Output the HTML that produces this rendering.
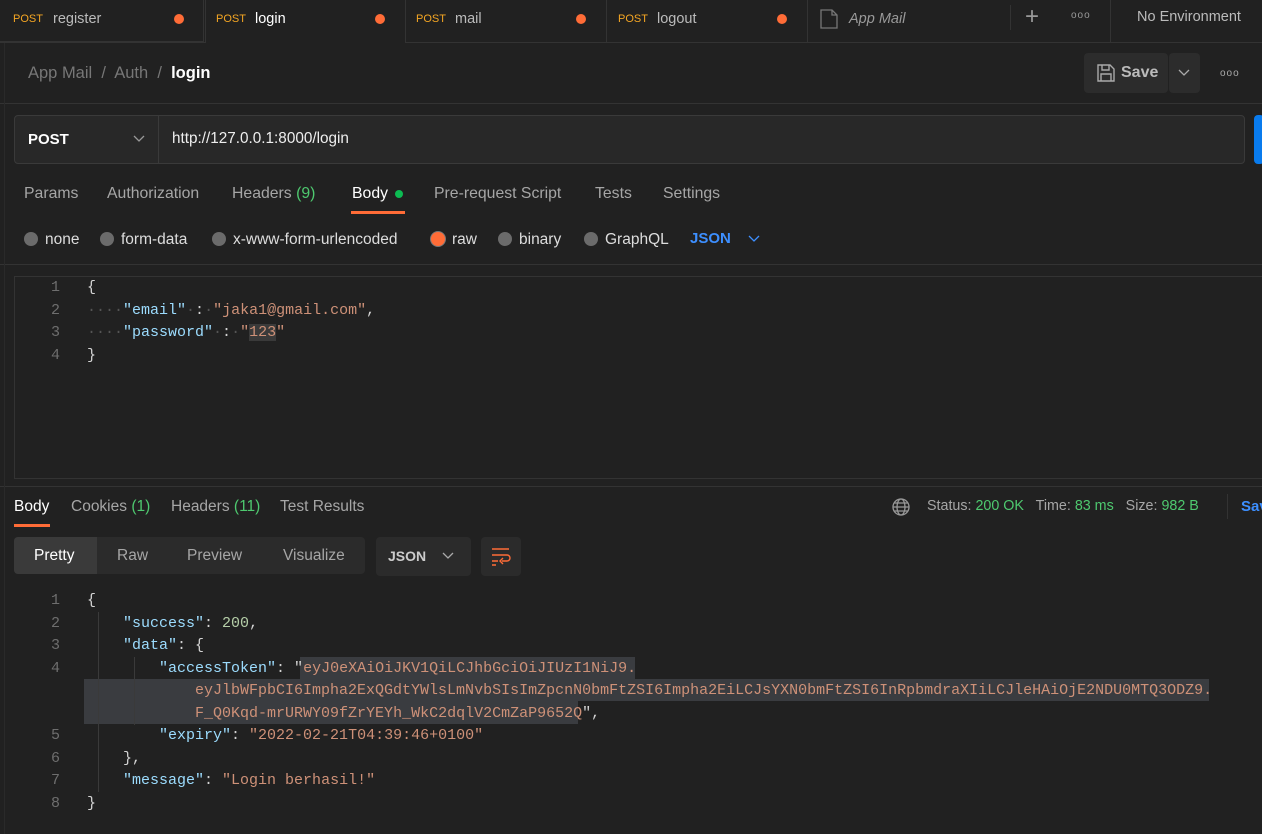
<!DOCTYPE html>
<html><head><meta charset="utf-8"><style>
*{box-sizing:border-box;margin:0;padding:0}
body{width:1262px;height:834px;background:#212121;font-family:"Liberation Sans",sans-serif;color:#a6a6a6;position:relative;overflow:hidden;font-size:14px}
.a{position:absolute;white-space:nowrap}
.tab{position:absolute;top:0;height:42px;border-right:1px solid #333;}
.m{font-size:11px;color:#f5a623}
.dot{position:absolute;width:10px;height:10px;border-radius:50%;background:#ff6c37;top:14px}
.mono{font-family:"Liberation Mono",monospace;font-size:15px}
.k{color:#9cdcfe}.s{color:#ce9178}.n{color:#b5cea8}.p{color:#d4d4d4}
.ln{color:#6e6e6e;text-align:right;width:20px}
.g{color:#4ec96f}
.radio{position:absolute;top:232px;width:14px;height:14px;border-radius:50%;background:#6b6b6b}
.rl{position:absolute;top:231px;font-size:15.5px;color:#ddd;white-space:nowrap}
.rt{position:absolute;top:185px;font-size:15.8px;white-space:nowrap}
</style></head><body>
<div class="a" style="left:0;top:42px;width:1262px;height:1px;background:#333"></div>
<div class="tab" style="left:0;width:204px;background:#212121;border-bottom:1px solid #333"><span class="a m" style="left:13px;top:13px">POST</span><span class="a" style="left:53px;top:11px;color:#bbb;font-size:14.5px">register</span><div class="dot" style="left:174px"></div></div>
<div class="tab" style="left:205px;width:201px;background:#212121;height:43px;border-left:1px solid #333"><span class="a m" style="left:10px;top:13px">POST</span><span class="a" style="left:49px;top:11px;color:#fff;font-size:14.5px">login</span><div class="dot" style="left:169px"></div></div>
<div class="tab" style="left:406px;width:201px;"><span class="a m" style="left:10px;top:13px">POST</span><span class="a" style="left:49px;top:11px;color:#bbb;font-size:14.5px">mail</span><div class="dot" style="left:170px"></div></div>
<div class="tab" style="left:607px;width:201px;border-right:1px solid #333"><span class="a m" style="left:11px;top:13px">POST</span><span class="a" style="left:50px;top:11px;color:#bbb;font-size:14.5px">logout</span><div class="dot" style="left:170px"></div></div>
<svg class="a" style="left:820px;top:9px" width="18" height="20"><path d="M1 1h11l5 5v13H1z M12 1v5h5" fill="none" stroke="#777" stroke-width="1.3"/></svg>
<span class="a" style="left:849px;top:11px;color:#999;font-style:italic;font-size:14.5px">App Mail</span>
<div class="a" style="left:1010px;top:5px;width:1px;height:25px;background:#333"></div>
<span class="a" style="left:1025px;top:3px;color:#999;font-size:24px;font-weight:300">+</span>
<span class="a" style="left:1071px;top:10px;color:#999;font-size:10px;letter-spacing:1px">ooo</span>
<div class="a" style="left:1110px;top:0;width:1px;height:42px;background:#333"></div>
<span class="a" style="left:1137px;top:9px;color:#bbb;font-size:14.5px">No Environment</span>
<span class="a" style="left:28px;top:64px;font-size:16.5px;color:#777">App Mail &nbsp;/&nbsp; Auth &nbsp;/&nbsp; <b style="color:#fff;font-weight:bold">login</b></span>
<div class="a" style="left:1084px;top:53px;width:84px;height:40px;background:#2c2c2c;border-radius:4px"></div>
<svg class="a" style="left:1096px;top:63px" width="20" height="20"><path d="M2 2h12l4 4v12H2z M6 2v5h7V2 M5 18v-7h10v7" fill="none" stroke="#aaa" stroke-width="1.4"/></svg>
<span class="a" style="left:1121px;top:64px;font-size:16px;font-weight:bold;color:#bbb">Save</span>
<div class="a" style="left:1169px;top:53px;width:31px;height:40px;background:#2c2c2c;border-radius:4px"></div>
<svg class="a" style="left:1178px;top:69px" width="12" height="8"><path d="M1 1l5 5 5-5" fill="none" stroke="#aaa" stroke-width="1.3"/></svg>
<span class="a" style="left:1220px;top:68px;color:#aaa;font-size:10px;letter-spacing:1px">ooo</span>
<div class="a" style="left:0;top:103px;width:1262px;height:1px;background:#333"></div>
<div class="a" style="left:14px;top:115px;width:1231px;height:49px;background:#282828;border:1px solid #3a3a3a;border-radius:4px"></div>
<div class="a" style="left:158px;top:116px;width:1px;height:47px;background:#3a3a3a"></div>
<span class="a" style="left:28px;top:131px;font-size:15px;font-weight:bold;color:#fff">POST</span>
<svg class="a" style="left:133px;top:135px" width="12" height="8"><path d="M1 1l5 5 5-5" fill="none" stroke="#999" stroke-width="1.3"/></svg>
<span class="a" style="left:172px;top:130px;font-size:15.3px;color:#eee">http://127.0.0.1:8000/login</span>
<div class="a" style="left:1254px;top:115px;width:10px;height:49px;background:#097bed;border-radius:4px"></div>
<span class="rt" style="left:24px">Params</span>
<span class="rt" style="left:107px">Authorization</span>
<span class="rt" style="left:232px">Headers <span class="g">(9)</span></span>
<span class="rt" style="left:352px;color:#fff">Body</span>
<div class="a" style="left:395px;top:190px;width:8px;height:8px;border-radius:50%;background:#0cbb52"></div>
<div class="a" style="left:351px;top:211px;width:54px;height:3px;background:#ff6c37"></div>
<span class="rt" style="left:434px">Pre-request Script</span>
<span class="rt" style="left:595px">Tests</span>
<span class="rt" style="left:663px">Settings</span>
<div class="radio" style="left:24px"></div><span class="rl" style="left:45px">none</span>
<div class="radio" style="left:100px"></div><span class="rl" style="left:121px">form-data</span>
<div class="radio" style="left:212px"></div><span class="rl" style="left:233px">x-www-form-urlencoded</span>
<div class="radio" style="left:431px;background:#ff6c37;box-shadow:0 0 0 1px #777"></div><span class="rl" style="left:452px">raw</span>
<div class="radio" style="left:498px"></div><span class="rl" style="left:519px">binary</span>
<div class="radio" style="left:584px"></div><span class="rl" style="left:605px">GraphQL</span>
<span class="a" style="left:690px;top:230px;font-size:15px;font-weight:bold;color:#3d8fff">JSON</span>
<svg class="a" style="left:748px;top:235px" width="12" height="8"><path d="M1 1l5 5 5-5" fill="none" stroke="#3d8fff" stroke-width="1.3"/></svg>
<div class="a" style="left:0;top:264px;width:1262px;height:1px;background:#333"></div>
<div class="a" style="left:14px;top:276px;width:1250px;height:203px;border:1px solid #333;border-right:none"></div>
<div class="a mono" style="left:40px;top:277px;line-height:22.5px">
<div style="display:flex"><span class="ln">1</span><span class="p" style="margin-left:27px">{</span></div>
<div style="display:flex"><span class="ln">2</span><span style="margin-left:27px;color:#555">····</span><span class="k">"email"</span><span style="color:#555">·</span><span class="p">:</span><span style="color:#555">·</span><span class="s">"jaka1@gmail.com"</span><span class="p">,</span></div>
<div style="display:flex"><span class="ln">3</span><span style="margin-left:27px;color:#555">····</span><span class="k">"password"</span><span style="color:#555">·</span><span class="p">:</span><span style="color:#555">·</span><span class="s">"<span style="background:#3a3a3a">123</span>"</span></div>
<div style="display:flex"><span class="ln">4</span><span class="p" style="margin-left:27px">}</span></div>
</div>
<div class="a" style="left:0;top:486px;width:1262px;height:1px;background:#333"></div>
<span class="a" style="left:14px;top:498px;font-size:15.5px;color:#fff">Body</span>
<div class="a" style="left:14px;top:524px;width:36px;height:3px;background:#ff6c37"></div>
<span class="a" style="left:71px;top:498px;font-size:15.5px">Cookies <span class="g">(1)</span></span>
<span class="a" style="left:171px;top:498px;font-size:15.5px">Headers <span class="g">(11)</span></span>
<span class="a" style="left:280px;top:498px;font-size:15.5px">Test Results</span>
<svg class="a" style="left:891px;top:497px" width="20" height="20"><g fill="none" stroke="#999" stroke-width="1.3"><circle cx="10" cy="10" r="8"/><ellipse cx="10" cy="10" rx="4" ry="8"/><path d="M2 10h16M3.5 6h13M3.5 14h13"/></g></svg>
<span class="a" style="left:927px;top:498px;font-size:14.3px">Status: <span class="g">200 OK</span> &nbsp; Time: <span class="g">83 ms</span> &nbsp; Size: <span class="g">982 B</span></span>
<div class="a" style="left:1227px;top:494px;width:1px;height:25px;background:#333"></div>
<span class="a" style="left:1241px;top:498px;font-size:15px;font-weight:bold;color:#3d8fff">Save</span>
<div class="a" style="left:14px;top:537px;width:351px;height:37px;background:#2b2b2b;border-radius:4px"></div>
<div class="a" style="left:14px;top:537px;width:83px;height:37px;background:#3a3a3a;border-radius:4px 0 0 4px"></div>
<span class="a" style="left:34px;top:547px;font-size:15.5px;color:#fff">Pretty</span>
<span class="a" style="left:117px;top:547px;font-size:15.5px">Raw</span>
<span class="a" style="left:187px;top:547px;font-size:15.5px">Preview</span>
<span class="a" style="left:283px;top:547px;font-size:15.5px">Visualize</span>
<div class="a" style="left:376px;top:537px;width:95px;height:39px;background:#2b2b2b;border-radius:4px"></div>
<span class="a" style="left:388px;top:548px;font-size:14px;font-weight:bold;color:#ccc">JSON</span>
<svg class="a" style="left:442px;top:552px" width="12" height="8"><path d="M1 1l5 5 5-5" fill="none" stroke="#aaa" stroke-width="1.3"/></svg>
<div class="a" style="left:481px;top:537px;width:40px;height:39px;background:#2b2b2b;border-radius:4px"></div>
<svg class="a" style="left:490px;top:547px" width="22" height="20"><g fill="none" stroke="#ff6c37" stroke-width="1.4"><path d="M2 2h17M2 8h15a3 3 0 0 1 0 6h-5M2 14h6M13 11l-3 3 3 3M2 18h4"/></g></svg>
<div class="a" style="left:84px;top:679px;width:494px;height:45px;background:#3a3c40"></div>
<div class="a" style="left:300px;top:657px;width:335px;height:23px;background:#3a3c40"></div>
<div class="a" style="left:578px;top:679px;width:631px;height:22px;background:#3a3c40"></div>
<div class="a" style="left:98px;top:612px;width:1px;height:180px;background:#3a3a3a"></div>
<div class="a" style="left:134px;top:657px;width:1px;height:68px;background:#3a3a3a"></div>
<div class="a mono" style="left:40px;top:590px;line-height:22.5px">
<div style="display:flex"><span class="ln">1</span><span class="p" style="margin-left:27px">{</span></div>
<div style="display:flex"><span class="ln">2</span><span class="p" style="margin-left:27px;white-space:pre">    <span class="k">"success"</span>: <span class="n">200</span>,</span></div>
<div style="display:flex"><span class="ln">3</span><span class="p" style="margin-left:27px;white-space:pre">    <span class="k">"data"</span>: {</span></div>
<div style="display:flex"><span class="ln">4</span><span class="p" style="margin-left:27px;white-space:pre">        <span class="k">"accessToken"</span>: "<span class="s">eyJ0eXAiOiJKV1QiLCJhbGciOiJIUzI1NiJ9.</span></span></div>
<div style="display:flex"><span class="ln"></span><span class="s" style="margin-left:27px;white-space:pre">            eyJlbWFpbCI6Impha2ExQGdtYWlsLmNvbSIsImZpcnN0bmFtZSI6Impha2EiLCJsYXN0bmFtZSI6InRpbmdraXIiLCJleHAiOjE2NDU0MTQ3ODZ9.</span></div>
<div style="display:flex"><span class="ln"></span><span class="p" style="margin-left:27px;white-space:pre">            <span class="s">F_Q0Kqd-mrURWY09fZrYEYh_WkC2dqlV2CmZaP9652Q</span>",</span></div>
<div style="display:flex"><span class="ln">5</span><span class="p" style="margin-left:27px;white-space:pre">        <span class="k">"expiry"</span>: <span class="s">"2022-02-21T04:39:46+0100"</span></span></div>
<div style="display:flex"><span class="ln">6</span><span class="p" style="margin-left:27px;white-space:pre">    },</span></div>
<div style="display:flex"><span class="ln">7</span><span class="p" style="margin-left:27px;white-space:pre">    <span class="k">"message"</span>: <span class="s">"Login berhasil!"</span></span></div>
<div style="display:flex"><span class="ln">8</span><span class="p" style="margin-left:27px">}</span></div>
</div>
<div class="a" style="left:4px;top:43px;width:1px;height:791px;background:#2a2a2a"></div>
</body></html>
